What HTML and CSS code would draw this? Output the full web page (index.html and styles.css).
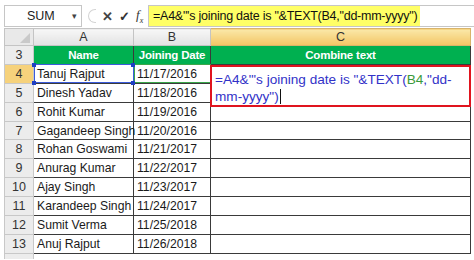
FILE: index.html
```html
<!DOCTYPE html>
<html lang="en">
<head>
    <meta charset="UTF-8">
    <title>Combine text</title>
    <link rel="stylesheet" href="styles.css">
</head>
<body>
    <div class="window">
        <div class="formula-bar">
            <div class="name-box">
                <span class="name-text">SUM</span>
                <span class="name-arrow">&#9662;</span>
            </div>
            <div class="bar-buttons">
                <span class="btn-dots"></span>
                <span class="btn-cancel">&#10005;</span>
                <span class="btn-enter">&#10003;</span>
                <span class="btn-fx">f<sub>x</sub></span>
            </div>
            <div class="formula-input">
                <span class="formula-hl">=A4&amp;"'s joining date is "&amp;TEXT(B4,"dd-mm-yyyy")</span>
            </div>
        </div>

        <table class="grid">
            <colgroup>
                <col class="col-rowhead">
                <col class="col-a">
                <col class="col-b">
                <col class="col-c">
            </colgroup>
            <thead>
                <tr class="col-heads">
                    <th class="corner"><span class="corner-tri"></span></th>
                    <th>A</th>
                    <th>B</th>
                    <th class="active-col">C</th>
                </tr>
            </thead>
            <tbody>
                <tr class="title-row">
                    <th class="row-head">3</th>
                    <td>Name</td>
                    <td>Joining Date</td>
                    <td>Combine text</td>
                </tr>
                <tr>
                    <th class="row-head active-row">4</th>
                    <td class="ref-a">Tanuj Rajput
                        <span class="handle h-tl"></span><span class="handle h-tr"></span>
                        <span class="handle h-bl"></span><span class="handle h-br"></span>
                    </td>
                    <td class="ref-b">11/17/2016</td>
                    <td class="edit-cell">
                        <div class="editor">=A4&amp;"'s joining date is "&amp;TEXT(<span class="ref-green">B4</span>,"dd-mm-yyyy")<span class="caret"></span></div>
                    </td>
                </tr>
                <tr><th class="row-head">5</th><td>Dinesh Yadav</td><td>11/18/2016</td><td class="under-edit"></td></tr>
                <tr><th class="row-head">6</th><td>Rohit Kumar</td><td>11/19/2016</td><td class="under-edit"></td></tr>
                <tr><th class="row-head">7</th><td>Gagandeep Singh</td><td>11/20/2016</td><td></td></tr>
                <tr><th class="row-head">8</th><td>Rohan Goswami</td><td>11/21/2017</td><td></td></tr>
                <tr><th class="row-head">9</th><td>Anurag Kumar</td><td>11/22/2017</td><td></td></tr>
                <tr><th class="row-head">10</th><td>Ajay Singh</td><td>11/23/2017</td><td></td></tr>
                <tr><th class="row-head">11</th><td>Karandeep Singh</td><td>11/24/2017</td><td></td></tr>
                <tr><th class="row-head">12</th><td>Sumit Verma</td><td>11/25/2018</td><td></td></tr>
                <tr><th class="row-head">13</th><td>Anuj Rajput</td><td>11/26/2018</td><td></td></tr>
                <tr class="cut-row"><th class="row-head"></th><td></td><td></td><td></td></tr>
            </tbody>
        </table>
    </div>
</body>
</html>
```

FILE: styles.css
```css
* {
    margin: 0;
    padding: 0;
    box-sizing: border-box;
}

body {
    background: #ffffff;
    font-family: 'Liberation Sans', Arial, sans-serif;
    font-size: 12px;
    color: #1a1a1a;
    overflow: hidden;
}

.window {
    width: 474px;
    height: 260px;
    padding: 5px 0 0 4px;
}

/* formula bar */
.formula-bar {
    display: flex;
    align-items: stretch;
    height: 22px;
}

.name-box {
    width: 78px;
    border: 1px solid #c6c6c6;
    display: flex;
    align-items: center;
    justify-content: space-between;
    padding: 0 4px 0 22px;
    font-size: 12.5px;
    color: #222;
}

.name-arrow {
    font-size: 9px;
    color: #444;
}

.bar-buttons {
    width: 66px;
    display: flex;
    align-items: center;
    gap: 6px;
    padding-left: 6px;
    color: #333;
}

.btn-dots {
    width: 8px;
    height: 14px;
    border: 1px solid #d4d4d4;
    border-right: none;
    border-radius: 8px 0 0 8px;
}

.btn-cancel {
    font-size: 13px;
    font-weight: bold;
    color: #444;
}

.btn-enter {
    font-size: 13px;
    font-weight: bold;
    color: #333;
}

.btn-fx {
    font-family: 'Liberation Serif', serif;
    font-style: italic;
    font-size: 13px;
    color: #333;
}

.btn-fx sub {
    font-size: 8px;
}

.formula-input {
    flex: 1;
    border: 1px solid #c6c6c6;
    border-right: none;
    display: flex;
    align-items: stretch;
}

.formula-hl {
    background: #ffff66;
    padding: 0 3px 0 4px;
    display: flex;
    align-items: center;
    font-size: 12.5px;
    letter-spacing: -0.25px;
    color: #111;
}

/* grid */
.grid {
    border-collapse: collapse;
    table-layout: fixed;
    width: 466px;
    margin-top: 1px;
}

.col-rowhead { width: 29px; }
.col-a { width: 100px; }
.col-b { width: 77px; }
.col-c { width: 260px; }

.col-heads th {
    height: 17px;
    background: linear-gradient(#f7f7f7, #e2e2e2);
    border: 1px solid #c4c4c4;
    font-weight: normal;
    font-size: 12.5px;
    color: #333;
}

.col-heads th.corner {
    position: relative;
    background: #e9e9e9;
}

.corner-tri {
    position: absolute;
    right: 3px;
    bottom: 2px;
    width: 0;
    height: 0;
    border-left: 10px solid transparent;
    border-bottom: 10px solid #c9c9c9;
}

.col-heads th.active-col {
    background: linear-gradient(#fbe8a8, #f3c564);
    border-color: #d9b46a;
}

.grid tbody tr {
    height: 18.9px;
}

.row-head {
    background: #ececec;
    border: 1px solid #c8c8c8;
    font-weight: normal;
    font-size: 12.5px;
    color: #333;
    text-align: center;
}

.row-head.active-row {
    background: #f6d27c;
}

.grid td {
    border: 1px solid #3a3a3a;
    padding: 0 2px 0 3px;
    white-space: nowrap;
    overflow: visible;
    font-size: 12.2px;
    line-height: 14px;
}

.title-row td {
    background: #00b050;
    color: #ffffff;
    font-weight: bold;
    font-size: 11.5px;
    letter-spacing: -0.2px;
    padding: 0;
    text-align: center;
    border-color: #3a3a3a;
}

/* formula reference highlights */
.ref-a {
    position: relative;
    outline: 1px solid #3b5bdb;
    outline-offset: -1px;
}

.ref-b {
    outline: 1px solid #3aa64a;
    outline-offset: -1px;
}

.handle {
    position: absolute;
    width: 4px;
    height: 4px;
    background: #1f3fc4;
}

.h-tl { left: -2px; top: -2px; }
.h-tr { right: -2px; top: -2px; }
.h-bl { left: -2px; bottom: -2px; }
.h-br { right: -2px; bottom: -2px; }

.edit-cell {
    position: relative;
}

.under-edit {
    border-top-color: #ffffff !important;
}

.editor {
    position: absolute;
    left: -1px;
    top: 0;
    width: 261px;
    height: 42px;
    border: 2px solid #e0141e;
    background: #ffffff;
    white-space: normal;
    color: #3232c8;
    font-size: 13.6px;
    line-height: 17px;
    padding: 4px 0 0 3px;
    z-index: 2;
}

.ref-green {
    color: #3a9a3a;
}

.caret {
    display: inline-block;
    width: 1px;
    height: 15px;
    background: #111;
    vertical-align: -3px;
    margin-left: 1px;
}

.cut-row {
    height: 6px !important;
}

.cut-row td {
    border: none;
    border-top: 1px solid #3a3a3a;
}

.cut-row .row-head {
    border-bottom: none;
}
```
